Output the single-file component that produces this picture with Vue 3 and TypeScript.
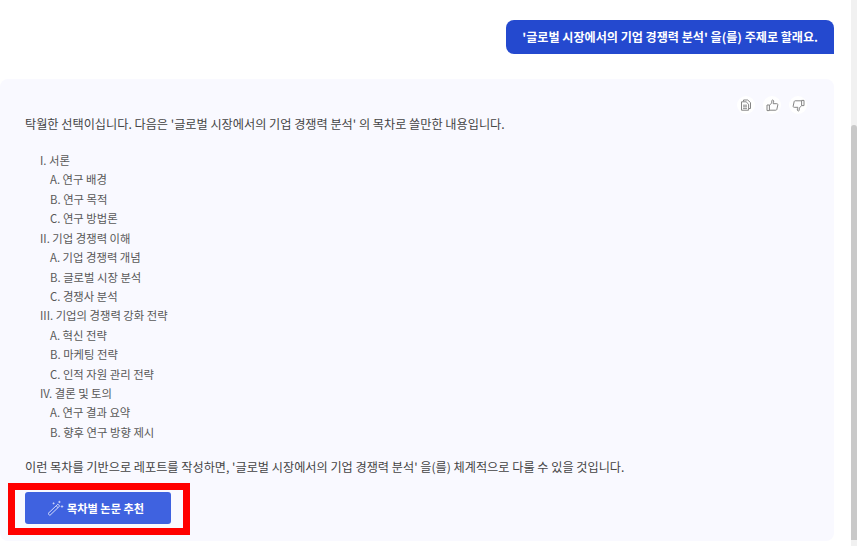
<template>
  <div class="page">
    <main class="chat">
      <div class="user-row">
        <div class="user-bubble">'글로벌 시장에서의 기업 경쟁력 분석' 을(를) 주제로 할래요.</div>
      </div>

      <section class="answer">
        <div class="actions">
          <button class="act" type="button" title="복사">
            <svg width="12" height="12" viewBox="0 0 12 12" fill="none" stroke="#858585" stroke-width="1">
              <path d="M3.5 2.5V1h4.2L10.5 3.6V9.5H9" />
              <path d="M1.5 2.8h4.6L8.6 5.2v6H1.5z" fill="#fff" />
              <path d="M3 6.2h4M3 7.8h4M3 9.4h4" stroke-width=".9" />
            </svg>
          </button>
          <button class="act" type="button" title="좋아요">
            <svg width="13" height="13" viewBox="0 0 13 13" fill="none" stroke="#858585" stroke-width="1" stroke-linejoin="round">
              <path d="M1 6h2.4v5.6H1z" />
              <path d="M3.4 6.2 5.8 4V1.6c0-.7 1.7-.8 1.9.4.1.9-.2 1.9-.6 2.7h3.7c.9 0 1.2.7 1 1.3l-1 4.5c-.2.5-.5.7-1 .7H3.4" />
            </svg>
          </button>
          <button class="act" type="button" title="싫어요">
            <svg width="13" height="13" viewBox="0 0 13 13" fill="none" stroke="#858585" stroke-width="1" stroke-linejoin="round">
              <path d="M9.6 1.4H12v5.2H9.6z" />
              <path d="M9.6 6.8 7.2 9v2.4c0 .7-1.7.8-1.9-.4-.1-.9.2-1.9.6-2.7H2.2c-.9 0-1.2-.7-1-1.3l1-4.5c.2-.5.5-.7 1-.7h6.4" />
            </svg>
          </button>
        </div>

        <p class="intro">탁월한 선택이십니다. 다음은 '글로벌 시장에서의 기업 경쟁력 분석' 의 목차로 쓸만한 내용입니다.</p>

        <ul class="toc">
          <template v-for="part in toc" :key="part.title">
            <li class="part">{{ part.title }}</li>
            <li v-for="item in part.items" :key="item" class="item">{{ item }}</li>
          </template>
        </ul>

        <p class="outro">이런 목차를 기반으로 레포트를 작성하면, '글로벌 시장에서의 기업 경쟁력 분석' 을(를) 체계적으로 다룰 수 있을 것입니다.</p>

        <div class="cta-wrap">
          <button class="cta" type="button">
            <svg width="17" height="17" viewBox="0 0 17 17" fill="none" stroke="#d5dcfa" stroke-width="1">
              <path d="M1 13.6 10.8 4.2l1.9 1.8L2.9 15.4z" />
              <path d="M9.2 5.8 11 7.6" />
              <path d="M12.4 .8v2.4M11.2 2h2.4M15 5.2v2.6M13.7 6.5h2.6M6.6 2.4v2M5.6 3.4h2" stroke-width=".8" />
            </svg>
            <span>목차별 논문 추천</span>
          </button>
          <div class="highlight"></div>
        </div>
      </section>
    </main>

    <div class="scrollbar">
      <div class="thumb"></div>
    </div>
  </div>
</template>

<script setup lang="ts">
interface TocPart {
  title: string
  items: string[]
}

const toc: TocPart[] = [
  { title: 'I. 서론', items: ['A. 연구 배경', 'B. 연구 목적', 'C. 연구 방법론'] },
  { title: 'II. 기업 경쟁력 이해', items: ['A. 기업 경쟁력 개념', 'B. 글로벌 시장 분석', 'C. 경쟁사 분석'] },
  { title: 'III. 기업의 경쟁력 강화 전략', items: ['A. 혁신 전략', 'B. 마케팅 전략', 'C. 인적 자원 관리 전략'] },
  { title: 'IV. 결론 및 토의', items: ['A. 연구 결과 요약', 'B. 향후 연구 방향 제시'] },
]
</script>

<style>
html,
body {
  margin: 0;
  background: #fff;
  overflow: hidden;
}
</style>

<style scoped>
.page {
  display: flex;
  width: 857px;
  height: 546px;
  overflow: hidden;
  font-family: 'Noto Sans CJK KR', 'Noto Sans', sans-serif;
}

.chat {
  width: 834px;
  padding-top: 20px;
  flex-shrink: 0;
}

.user-row {
  display: flex;
  justify-content: flex-end;
}

.user-bubble {
  height: 34px;
  line-height: 33px;
  padding: 0 16px;
  border-radius: 8px 8px 0 8px;
  background: #2449cf;
  color: #fff;
  font-size: 12.08px;
  font-weight: 700;
  white-space: nowrap;
}

.answer {
  margin-top: 25px;
  height: 462px;
  box-sizing: border-box;
  padding: 17px 0 0 25px;
  border-radius: 8px;
  background: #f9f9ff;
  color: #444;
  font-size: 12.16px;
}

.actions {
  display: flex;
  justify-content: flex-end;
  gap: 8px;
  height: 18px;
  padding-right: 27px;
}

.act {
  display: flex;
  align-items: center;
  justify-content: center;
  width: 18px;
  height: 18px;
  padding: 0;
  border: 0;
  border-radius: 50%;
  background: #fff;
}

.intro {
  margin: 0;
  line-height: 20px;
}

.toc {
  margin: 17px 0 0;
  padding: 0 0 0 15px;
  list-style: none;
  color: #585858;
  font-size: 11.35px;
}

.toc li {
  height: 19.43px;
  line-height: 19.43px;
}

.item {
  padding-left: 10px;
}

.outro {
  margin: 14.8px 0 0;
  line-height: 20px;
}

.cta-wrap {
  position: relative;
  margin-top: 15px;
  width: 146px;
}

.cta {
  display: flex;
  align-items: center;
  justify-content: center;
  gap: 3px;
  width: 146px;
  height: 32px;
  padding: 0 5px 0 0;
  border: 0;
  border-radius: 3px;
  background: #3f62e0;
  color: #fff;
  font-family: inherit;
  font-size: 11.2px;
  font-weight: 700;
}

.highlight {
  position: absolute;
  left: -17px;
  top: -9px;
  width: 168px;
  height: 38px;
  border: 7px solid #f00;
  pointer-events: none;
}

.scrollbar {
  margin-left: 17px;
  width: 6px;
  height: 546px;
  background: #f1f1f1;
  display: flex;
  flex-direction: column;
  justify-content: flex-end;
}

.thumb {
  height: 415px;
  margin-bottom: 6px;
  border-radius: 3px 3px 0 0;
  background: #c9c9c9;
}
</style>
